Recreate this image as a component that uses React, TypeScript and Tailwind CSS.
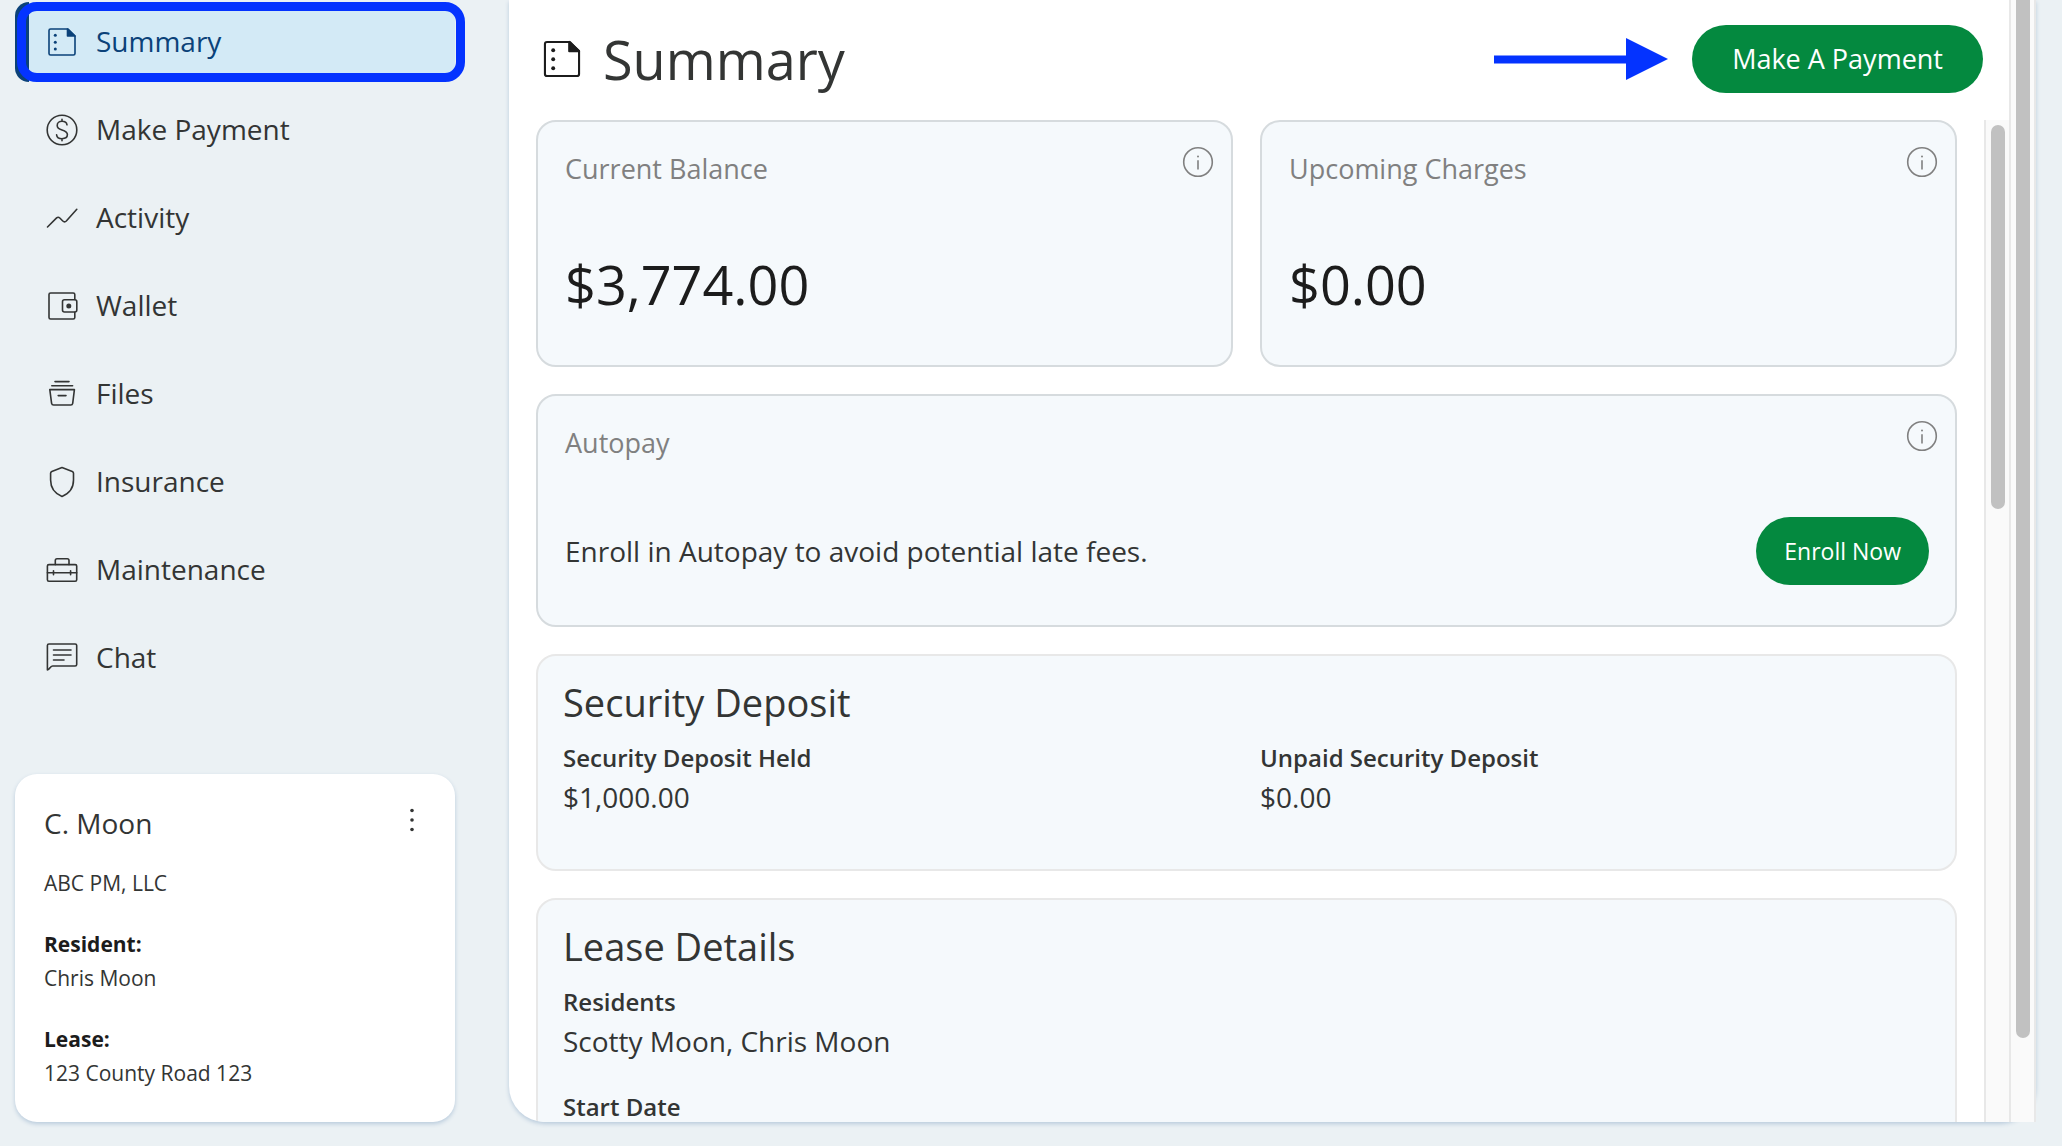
import type { ReactNode } from "react";

interface NavItem {
  label: string;
  icon: ReactNode;
  active?: boolean;
}

interface IconProps {
  className?: string;
  children: ReactNode;
}

function Icon({ className = "size-8", children }: IconProps) {
  return (
    <svg
      className={`${className} shrink-0`}
      viewBox="0 0 32 32"
      fill="none"
      stroke="currentColor"
      strokeWidth={1.6}
      strokeLinecap="round"
      strokeLinejoin="round"
      aria-hidden="true"
    >
      {children}
    </svg>
  );
}

function SummaryIcon({ className }: { className?: string }) {
  return (
    <Icon className={className}>
      <path d="M22 3H4.6Q3 3 3 4.6V27.4Q3 29 4.6 29H27.4Q29 29 29 27.4V10Z" />
      <path d="M21.5 3V10H29Z" fill="currentColor" />
      <g fill="currentColor" stroke="none">
        <circle cx="9.3" cy="9.3" r="1.5" />
        <circle cx="9.3" cy="16.2" r="1.5" />
        <circle cx="9.3" cy="23" r="1.5" />
      </g>
    </Icon>
  );
}

function InfoIcon() {
  return (
    <Icon className="size-8">
      <circle cx="16" cy="16" r="14.3" />
      <path d="M16 14.2V23.5" strokeLinecap="butt" />
      <circle cx="16" cy="10.4" r="1" fill="currentColor" stroke="none" />
    </Icon>
  );
}

const navItems: NavItem[] = [
  { label: "Summary", active: true, icon: <SummaryIcon /> },
  {
    label: "Make Payment",
    icon: (
      <Icon>
        <circle cx="16" cy="16" r="14.8" />
        <path d="M21 10.8C20.6 8.6 18.6 7.3 16 7.3S11.2 8.9 11.2 11.4C11.2 14.4 13.6 15.2 16 15.9S21.4 17.8 21.4 20.6C21.4 23.2 19 24.7 16 24.7S10.9 23.2 10.6 20.8M16 5.2V7.3M16 24.7V26.8" />
      </Icon>
    ),
  },
  {
    label: "Activity",
    icon: (
      <Icon>
        <path d="M1.5 25L10.6 15.9Q12.2 14.5 13.8 16L16.8 19Q18.6 20.8 20.3 19L30.8 7.3" />
      </Icon>
    ),
  },
  {
    label: "Wallet",
    icon: (
      <Icon>
        <path d="M28.8 9.5V4.6Q28.8 3 27.2 3H4.6Q3 3 3 4.6V27.4Q3 29 4.6 29H27.2Q28.8 29 28.8 27.4V22.2" />
        <rect x="16.5" y="9.7" width="14.3" height="12.3" rx="2" />
        <circle cx="22.8" cy="16" r="2.5" fill="currentColor" stroke="none" />
      </Icon>
    ),
  },
  {
    label: "Files",
    icon: (
      <Icon>
        <path d="M9 3.6H23M5.8 7.8H26.6M12.2 17.6H20M3.8 11.6H28.4L26.7 25.3Q26.4 27 24.8 27H7.6Q5.9 27 5.6 25.3Z" />
      </Icon>
    ),
  },
  {
    label: "Insurance",
    icon: (
      <Icon>
        <path d="M16 1.6L26.3 5.4Q27.5 5.9 27.5 7.2V14C27.5 22 22.5 27.8 16 30.4C9.5 27.8 4.6 22 4.6 14V7.2Q4.6 5.9 5.8 5.4Z" />
      </Icon>
    ),
  },
  {
    label: "Maintenance",
    icon: (
      <Icon>
        <rect x="1.4" y="10.6" width="29.3" height="16.6" rx="1.5" />
        <path d="M9.3 10.6V6.6Q9.3 4.8 11 4.8H21.3Q23 4.8 23 6.6V10.6M1.4 18.8H30.7M7.5 16.8V20.8M24.6 16.8V20.8" />
      </Icon>
    ),
  },
  {
    label: "Chat",
    icon: (
      <Icon>
        <path d="M1.4 28V3.5Q1.4 2 3 2H29.1Q30.7 2 30.7 3.5V22.4Q30.7 24 29.1 24H6.7Q5.4 24 4.5 25.2L3 26.9Q1.4 28.6 1.4 27ZM7.5 8H25M7.5 13H25M7.5 18H18" />
      </Icon>
    ),
  },
];

function Sidebar() {
  return (
    <aside className="flex w-[440px] shrink-0 flex-col pt-0.5">
      <nav className="flex flex-col gap-2">
        {navItems.map((item) => (
          <a
            key={item.label}
            href="#"
            className={
              item.active
                ? "relative flex h-20 items-center gap-[18px] rounded-[20px] bg-[#d3eaf6] px-[31px] text-[#0b4279]"
                : "flex h-20 items-center gap-[18px] px-[31px]"
            }
          >
            {item.active && (
              <>
                <span className="absolute inset-y-0 left-0 w-3.5 rounded-l-[14px] bg-[#0b4279]" />
                {/* highlight frame around the current entry */}
                <span className="absolute inset-y-0 left-0.5 -right-2.5 rounded-[20px] border-[9px] border-[#0433ff]" />
              </>
            )}
            {item.icon}
            <span className="pb-0.5">{item.label}</span>
          </a>
        ))}
      </nav>

      <section className="mt-auto rounded-[22px] bg-white px-[29px] pb-8 pt-7 text-[21px] leading-[34px] shadow-[0_2px_4px_#b9cbdc]">
        <div className="flex items-start justify-between">
          <h2 className="text-[28px] leading-[42px]">C. Moon</h2>
          <button type="button" aria-label="Account menu" className="mr-1.5 mt-0.5">
            <svg className="h-8 w-4" viewBox="0 0 16 32" fill="currentColor" aria-hidden="true">
              <circle cx="8" cy="6.5" r="1.8" />
              <circle cx="8" cy="16" r="1.8" />
              <circle cx="8" cy="25.5" r="1.8" />
            </svg>
          </button>
        </div>
        <p className="mt-[22px]">ABC PM, LLC</p>
        <dl>
          <dt className="mt-[27px] font-bold text-[#1c1c1c]">Resident:</dt>
          <dd>Chris Moon</dd>
          <dt className="mt-[27px] font-bold text-[#1c1c1c]">Lease:</dt>
          <dd>123 County Road 123</dd>
        </dl>
      </section>
    </aside>
  );
}

function CardHeader({ title }: { title: string }) {
  return (
    <div className="flex items-start justify-between text-[27px] text-[#808080]">
      <h2 className="mt-[3px] leading-10">{title}</h2>
      <button type="button" aria-label={`About ${title}`}>
        <InfoIcon />
      </button>
    </div>
  );
}

function AmountCard({ title, amount }: { title: string; amount: string }) {
  return (
    <section className="h-[247px] flex-1 rounded-[20px] border-2 border-[#d6dbde] bg-[#f5f9fc] pl-[27px] pr-[17px] pt-6">
      <CardHeader title={title} />
      <p className="mt-[59px] text-[54px] leading-[72px] text-[#1c1c1c]">{amount}</p>
    </section>
  );
}

function Detail({ label, value }: { label: string; value: string }) {
  return (
    <div className="flex-1">
      <dt className="text-2xl leading-10 font-semibold">{label}</dt>
      <dd className="leading-[38px]">{value}</dd>
    </div>
  );
}

export default function App() {
  return (
    <div className="flex h-screen gap-[54px] overflow-hidden bg-[#ebf1f4] pb-6 pl-[15px] pr-[26px] font-['Open_Sans','Noto_Sans',sans-serif] text-[28px] text-[#333534]">
      <Sidebar />

      <main className="flex min-w-0 flex-1 rounded-b-[36px] bg-white shadow-[0_2px_4px_#b9cbdc]">
        <div className="flex min-w-0 flex-1 flex-col overflow-hidden rounded-bl-[36px]">
          <header className="flex h-30 shrink-0 items-center justify-between pb-0.5 pl-8 pr-[26px]">
            <div className="flex items-center gap-5">
              <SummaryIcon className="size-[42px] text-[#1c1c1c]" />
              <h1 className="text-[54px] leading-[72px]">Summary</h1>
            </div>
            <div className="flex items-center gap-6">
              <svg className="h-[42px] w-[174px]" viewBox="0 0 174 42" fill="#0433ff" aria-hidden="true">
                <path d="M0 17.5H132V0L174 21L132 42V25.5H0Z" />
              </svg>
              <button type="button" className="h-17 rounded-full bg-[#04893f] px-10 text-[27px] text-white">
                Make A Payment
              </button>
            </div>
          </header>

          <div className="flex min-h-0 flex-1">
            <div className="flex min-w-0 flex-1 flex-col gap-[27px] overflow-hidden px-[27px]">
              <div className="flex shrink-0 gap-[27px]">
                <AmountCard title="Current Balance" amount="$3,774.00" />
                <AmountCard title="Upcoming Charges" amount="$0.00" />
              </div>

              <section className="h-[233px] shrink-0 rounded-[20px] border-2 border-[#d6dbde] bg-[#f5f9fc] pl-[27px] pr-[17px] pt-6">
                <CardHeader title="Autopay" />
                <div className="mr-[9px] mt-[54px] flex items-center justify-between">
                  <p>Enroll in Autopay to avoid potential late fees.</p>
                  <button type="button" className="h-17 rounded-full bg-[#04893f] px-7 text-[23px] text-white">
                    Enroll Now
                  </button>
                </div>
              </section>

              <section className="h-[217px] shrink-0 rounded-[20px] border-2 border-[#e8e8e8] bg-[#f5f9fc] px-[25px] pt-[19px]">
                <h2 className="text-[38px] leading-[54px]">Security Deposit</h2>
                <dl className="mt-[9px] flex gap-[27px]">
                  <Detail label="Security Deposit Held" value="$1,000.00" />
                  <Detail label="Unpaid Security Deposit" value="$0.00" />
                </dl>
              </section>

              <section className="shrink-0 rounded-[20px] border-2 border-[#e8e8e8] bg-[#f5f9fc] px-[25px] py-[19px]">
                <h2 className="text-[38px] leading-[54px]">Lease Details</h2>
                <dl className="mt-[9px] flex flex-col gap-[27px]">
                  <Detail label="Residents" value="Scotty Moon, Chris Moon" />
                  <Detail label="Start Date" value="" />
                </dl>
              </section>
            </div>

            {/* list scrollbar */}
            <div className="w-[25px] shrink-0 border-l-2 border-[#e8e8e8] bg-[#fafafa] px-[5px] pt-[5px]">
              <div className="h-[384px] w-3.5 rounded-full bg-[#c1c1c1]" />
            </div>
          </div>
        </div>

        {/* page scrollbar */}
        <div className="w-[27px] shrink-0 border-x-2 border-[#e8e8e8] bg-[#fafafa] px-[5px]">
          <div className="h-[1038px] w-3.5 rounded-b-full bg-[#c1c1c1]" />
        </div>
      </main>
    </div>
  );
}
